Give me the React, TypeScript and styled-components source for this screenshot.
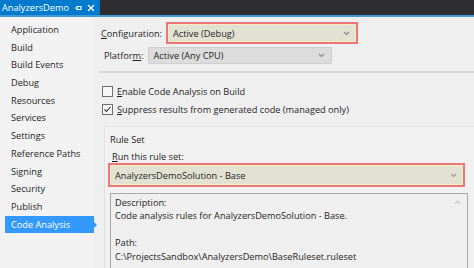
import React from "react";
import styled, { createGlobalStyle } from "styled-components";

const GlobalStyle = createGlobalStyle`
  html, body {
    margin: 0;
    padding: 0;
    background: #efeff0;
  }
  body {
    font-family: "Open Sans", "Noto Sans", sans-serif;
    font-size: 9.2px;
    color: #1e1e1e;
  }
`;

const Window = styled.div`
  width: 474px;
  height: 268px;
  overflow: hidden;
  display: flex;
  flex-direction: column;
  background: #efeff0;
`;

const TitleBar = styled.div`
  height: 15px;
  background: #2d2d30;
  border-bottom: 2px solid #3e9ad8;
  display: flex;
`;

const Tab = styled.div`
  width: 100px;
  background: #007acc;
  color: #fff;
  display: flex;
  align-items: center;
  padding-left: 2px;
  box-sizing: border-box;
  font-size: 9.2px;
`;

const TabName = styled.span`
  flex: 1;
  white-space: nowrap;
`;

const TabIcon = styled.svg`
  flex-shrink: 0;
  width: 8px;
  height: 8px;
  margin-right: 5px;
`;

const Body = styled.div`
  flex: 1;
  display: flex;
  min-height: 0;
`;

const Nav = styled.ul`
  list-style: none;
  margin: 0;
  padding: 4px 0 0 5px;
  width: 100px;
  box-sizing: border-box;
  background: #f2f2f3;
`;

const NavItem = styled.li<{ $active?: boolean }>`
  position: relative;
  height: 17.7px;
  line-height: 17.7px;
  padding-left: 6px;
  width: 89px;
  box-sizing: border-box;
  background: ${(p) => (p.$active ? "#3399ff" : "transparent")};
  color: ${(p) => (p.$active ? "#fff" : "#1e1e1e")};

  &::after {
    content: "";
    display: ${(p) => (p.$active ? "block" : "none")};
    position: absolute;
    right: -3px;
    top: 6px;
    border-left: 3px solid #3399ff;
    border-top: 3px solid transparent;
    border-bottom: 3px solid transparent;
  }
`;

const Content = styled.div`
  flex: 1;
  display: flex;
  flex-direction: column;
  padding: 5px 0 0 7px;
`;

const FieldRow = styled.div<{ $top?: number }>`
  display: flex;
  align-items: center;
  gap: 4px;
  margin-top: ${(p) => p.$top ?? 0}px;
`;

const Label = styled.span<{ $indent?: number }>`
  padding-left: ${(p) => p.$indent ?? 0}px;
`;

const U = styled.span`
  text-decoration: underline;
`;

const Select = styled.div<{ $width: number; $height: number; $highlight?: boolean; $top?: number }>`
  width: ${(p) => p.$width}px;
  height: ${(p) => p.$height}px;
  margin-top: ${(p) => p.$top ?? 0}px;
  box-sizing: border-box;
  display: flex;
  align-items: center;
  justify-content: space-between;
  padding: 0 6px 0 5px;
  background: ${(p) => (p.$highlight ? "#e2e2d3" : "#dcdcdc")};
  border: ${(p) => (p.$highlight ? "2px solid #e8767a" : "1px solid #cfcfcf")};
  box-shadow: ${(p) => (p.$highlight ? "inset 0 0 0 1px #f4ecc4" : "none")};
`;

const Chevron = styled.svg`
  width: 7px;
  height: 5px;
`;

const Separator = styled.div`
  height: 0;
  border-top: 2px solid #d9d9d9;
  margin: 7px 0 0 -2px;
`;

const CheckRow = styled.label<{ $top: number }>`
  display: flex;
  align-items: center;
  gap: 4px;
  margin: ${(p) => p.$top}px 0 0 1px;
  height: 12px;
`;

const Box = styled.span`
  width: 11px;
  height: 11px;
  box-sizing: border-box;
  border: 1px solid #6d6d6d;
  background: #f7f7f7;
  display: flex;
  align-items: center;
  justify-content: center;
`;

const Group = styled.div`
  margin: 11px 0 0 3px;
  border-left: 1px solid #e2e2e2;
  border-top: 1px solid #e2e2e2;
  background: #f1f1f2;
  flex: 1;
  display: flex;
  flex-direction: column;
  padding: 0 6px 0 3px;
`;

const GroupTitle = styled.div`
  padding: 6px 0 0 2px;
  height: 12px;
`;

const RunLabel = styled.div`
  padding: 5px 0 0 4px;
  height: 11px;
`;

const Details = styled.div`
  margin: 6px 0 0 2px;
  width: 352px;
  flex: 1;
  border: 1px solid #a9a9a9;
  border-bottom: none;
  background: #efefef;
  position: relative;
  padding: 2px 0 0 4px;
  line-height: 13.4px;
`;

const ScrollArrow = styled.svg`
  position: absolute;
  top: 6px;
  right: 6px;
  width: 7px;
  height: 4px;
`;

const Line = styled.div`
  height: 13.4px;
`;

const navItems = [
  "Application",
  "Build",
  "Build Events",
  "Debug",
  "Resources",
  "Services",
  "Settings",
  "Reference Paths",
  "Signing",
  "Security",
  "Publish",
  "Code Analysis",
];

const Down = ({ color }: { color: string }) => (
  <Chevron viewBox="0 0 7 5">
    <path d="M1 1 L3.5 3.5 L6 1" fill="none" stroke={color} strokeWidth="1.2" />
  </Chevron>
);

export default function App() {
  return (
    <Window>
      <GlobalStyle />
      <TitleBar>
        <Tab>
          <TabName>AnalyzersDemo</TabName>
          <TabIcon viewBox="0 0 8 8">
            <path d="M1 4 H3 M3 2 V6 M3 2.5 H7 V5.5 H3" fill="none" stroke="#fff" strokeWidth="1.1" />
          </TabIcon>
          <TabIcon viewBox="0 0 8 8">
            <path d="M1 1 L7 7 M7 1 L1 7" stroke="#fff" strokeWidth="1.4" />
          </TabIcon>
        </Tab>
      </TitleBar>
      <Body>
        <Nav>
          {navItems.map((item) => (
            <NavItem key={item} $active={item === "Code Analysis"}>
              {item}
            </NavItem>
          ))}
        </Nav>
        <Content>
          <FieldRow>
            <Label>
              <U>C</U>onfiguration:
            </Label>
            <Select $width={192} $height={22} $highlight>
              Active (Debug)
              <Down color="#888" />
            </Select>
          </FieldRow>
          <FieldRow $top={3}>
            <Label $indent={3}>
              Platfor<U>m</U>:
            </Label>
            <Select $width={184} $height={17}>
              Active (Any CPU)
              <Down color="#888" />
            </Select>
          </FieldRow>
          <Separator />
          <CheckRow $top={12}>
            <Box />
            <span>
              <U>E</U>nable Code Analysis on Build
            </span>
          </CheckRow>
          <CheckRow $top={6}>
            <Box>
              <svg width="9" height="9" viewBox="0 0 9 9">
                <path d="M1.5 4.5 L3.5 6.5 L7.5 2" fill="none" stroke="#333" strokeWidth="1.1" />
              </svg>
            </Box>
            <span>
              <U>S</U>uppress results from generated code (managed only)
            </span>
          </CheckRow>
          <Group>
            <GroupTitle>Rule Set</GroupTitle>
            <RunLabel>
              <U>R</U>un this rule set:
            </RunLabel>
            <Select $width={357} $height={24} $highlight $top={2}>
              AnalyzersDemoSolution - Base
              <Down color="#999" />
            </Select>
            <Details>
              <ScrollArrow viewBox="0 0 7 4">
                <path d="M1 3.5 L3.5 1 L6 3.5" fill="none" stroke="#aaa" strokeWidth="1" />
              </ScrollArrow>
              <Line>Description:</Line>
              <Line>Code analysis rules for AnalyzersDemoSolution - Base.</Line>
              <Line />
              <Line>Path:</Line>
              <Line>C:\ProjectsSandbox\AnalyzersDemo\BaseRuleset.ruleset</Line>
            </Details>
          </Group>
        </Content>
      </Body>
    </Window>
  );
}
